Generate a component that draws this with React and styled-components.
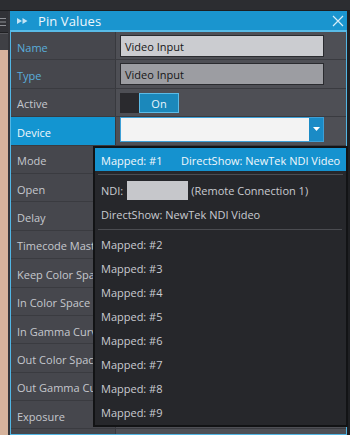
import React from "react";
import styled, { createGlobalStyle } from "styled-components";

const GlobalStyle = createGlobalStyle`
  html, body { margin: 0; padding: 0; background: #26272b; }
  body { font-family: "Open Sans", "Noto Sans", sans-serif; font-size: 11px; overflow: hidden; }
  * { box-sizing: border-box; }
`;

const Page = styled.div`
  position: relative;
  width: 350px;
  height: 435px;
  overflow: hidden;
  display: flex;
  flex-direction: column;
  background: #26272b;
`;

const TopStrip = styled.div`
  flex: none;
  height: 11px;
  background: #2c2d31;
  border-bottom: 1px solid #1d1e21;
`;

const Body = styled.div`
  flex: 1;
  min-height: 0;
  display: flex;
`;

const Rail = styled.div`
  flex: none;
  width: 8px;
  display: flex;
  flex-direction: column;
`;

const RailTool = styled.div`
  height: 22px;
  background: #313237;
  border-bottom: 1px solid #1f2023;
  display: flex;
  align-items: center;
`;

const RailBlock = styled.div`
  height: 17px;
  background: #3f4045;
  border-top: 1px solid #57585d;
`;

const RailFill = styled.div`
  flex: 1;
  background: #d6b39c;
`;

const RailGap = styled.div`
  flex: none;
  width: 2px;
  background: #34353a;
`;

const RightEdge = styled.div`
  flex: none;
  width: 3px;
  background: #1f2023;
`;

const Window = styled.div`
  flex: 1;
  min-width: 0;
  display: flex;
  flex-direction: column;
`;

const TitleBar = styled.div`
  flex: none;
  height: 19px;
  background: #1a95cf;
  display: flex;
  align-items: center;
  padding: 0 3px 0 7px;
`;

const Title = styled.span`
  margin-left: 10px;
  font-size: 13px;
  color: #eef7fc;
  letter-spacing: 0.1px;
`;

const CloseIcon = styled.svg`
  margin-left: auto;
  display: block;
`;

const Panel = styled.div`
  flex: 1;
  min-height: 0;
  overflow: hidden;
  background: #4e4f55;
  border: 1px solid #52b6e4;
  border-top: 2px solid #58bbe7;
`;

const Row = styled.div`
  display: grid;
  grid-template-columns: 105px 1fr;
  height: 28.4px;
  border-bottom: 1px solid #3a3b40;
`;

const Label = styled.div`
  display: flex;
  align-items: center;
  padding: 3px 0 0 6px;
  white-space: nowrap;
  overflow: hidden;
  border-right: 1px solid #38393e;
  background: ${(p) => (p.$active ? "#1395d1" : "#46474d")};
  color: ${(p) =>
    p.$active ? "#f4f9fc" : p.$tone === "blue" ? "#5aaedb" : "#c5c7cd"};
`;

const Value = styled.div`
  display: flex;
  align-items: center;
  padding: 0 22px 0 4px;
`;

const TextField = styled.div`
  width: 204px;
  height: 22px;
  display: flex;
  align-items: center;
  padding: 1px 0 0 4px;
  color: #161616;
  background: ${(p) => p.$shade};
  border: 1px solid #2a2b2f;
`;

const Toggle = styled.div`
  display: flex;
  height: 20px;
  margin-top: 1px;
`;

const ToggleOff = styled.div`
  width: 19px;
  background: #2a2a2e;
`;

const ToggleOn = styled.div`
  width: 40px;
  display: flex;
  align-items: center;
  justify-content: center;
  padding-top: 1px;
  color: #e8f4fb;
  background: #1b88bb;
  border: 1px solid #5cbbe6;
`;

const Select = styled.div`
  width: 204px;
  height: 25px;
  margin-top: -3px;
  display: flex;
  justify-content: flex-end;
  background: #f3f3f3;
  border: 1px solid #3d9fd6;
`;

const SelectArrow = styled.div`
  width: 14px;
  display: flex;
  align-items: center;
  justify-content: center;
  background: #1a8bc6;
`;

const Popup = styled.div`
  position: absolute;
  left: 93px;
  top: 146px;
  width: 255px;
  height: 281px;
  display: flex;
  flex-direction: column;
  padding-bottom: 1px;
  background: #26272b;
  border: 2px solid #121315;
  color: #c9cbd1;
`;

const Option = styled.div`
  flex: none;
  height: ${(p) => p.$h || 24}px;
  display: flex;
  align-items: center;
  padding: 1px 0 0 6px;
  white-space: nowrap;
  background: ${(p) => (p.$selected ? "#1592cf" : "transparent")};
  color: ${(p) => (p.$selected ? "#f2f8fc" : "#c9cbd1")};
`;

const OptionKey = styled.span`
  display: inline-block;
  width: 80px;
`;

const Divider = styled.div`
  flex: none;
  height: 1px;
  margin: ${(p) => p.$m};
  background: #4b4c51;
`;

const Redacted = styled.span`
  display: inline-block;
  width: 61px;
  height: 19px;
  margin: -1px 3px 0 4px;
  background: #c6c7cb;
`;

const rows = [
  { id: "name", label: "Name", tone: "blue", kind: "text", shade: "#cbccd0", text: "Video Input" },
  { id: "type", label: "Type", tone: "blue", kind: "text", shade: "#9c9da2", text: "Video Input" },
  { id: "active", label: "Active", kind: "toggle" },
  { id: "device", label: "Device", kind: "select", active: true },
  { id: "mode", label: "Mode" },
  { id: "open", label: "Open" },
  { id: "delay", label: "Delay" },
  { id: "tc", label: "Timecode Master" },
  { id: "keep", label: "Keep Color Space" },
  { id: "incs", label: "In Color Space" },
  { id: "ingc", label: "In Gamma Curve" },
  { id: "outcs", label: "Out Color Space" },
  { id: "outgc", label: "Out Gamma Curve" },
  { id: "exp", label: "Exposure" },
  { id: "next", label: "" },
];

function renderValue(r) {
  if (r.kind === "text") return <TextField $shade={r.shade}>{r.text}</TextField>;
  if (r.kind === "toggle")
    return (
      <Toggle>
        <ToggleOff />
        <ToggleOn>On</ToggleOn>
      </Toggle>
    );
  if (r.kind === "select")
    return (
      <Select>
        <SelectArrow>
          <svg width="7" height="4" viewBox="0 0 7 4">
            <path d="M0 0H7L3.5 4Z" fill="#ffffff" />
          </svg>
        </SelectArrow>
      </Select>
    );
  return null;
}

const mapped = [2, 3, 4, 5, 6, 7, 8, 9];

export default function App() {
  return (
    <Page>
      <GlobalStyle />
      <TopStrip />
      <Body>
        <Rail>
          <RailTool>
            <svg width="7" height="12" viewBox="0 0 7 12">
              <path d="M0 2.5H6M0 6H6M0 9.5H6" stroke="#8e9096" strokeWidth="1" />
            </svg>
          </RailTool>
          <RailBlock />
          <RailFill />
        </Rail>
        <RailGap />
        <Window>
          <TitleBar>
            <svg width="11" height="6" viewBox="0 0 11 6">
              <path d="M0 0L5 3L0 6Z M5.5 0L10.5 3L5.5 6Z" fill="#c3e4f5" />
            </svg>
            <Title>Pin Values</Title>
            <CloseIcon width="12" height="12" viewBox="0 0 12 12">
              <path d="M1 1L11 11M11 1L1 11" stroke="#d6edf8" strokeWidth="1.2" />
            </CloseIcon>
          </TitleBar>
          <Panel>
            {rows.map((r) => (
              <Row key={r.id}>
                <Label $tone={r.tone} $active={r.active}>
                  {r.label}
                </Label>
                <Value>{renderValue(r)}</Value>
              </Row>
            ))}
          </Panel>
        </Window>
        <RightEdge />
      </Body>
      <Popup>
        <Option $selected $h={23}>
          <OptionKey>Mapped: #1</OptionKey>
          DirectShow: NewTek NDI Video
        </Option>
        <Divider $m="3px 3px 3px 3px" />
        <Option>
          NDI:
          <Redacted />
          (Remote Connection 1)
        </Option>
        <Option>DirectShow: NewTek NDI Video</Option>
        <Divider $m="3px 4px 2px 3px" />
        {mapped.map((n) => (
          <Option key={n}>Mapped: #{n}</Option>
        ))}
      </Popup>
    </Page>
  );
}
